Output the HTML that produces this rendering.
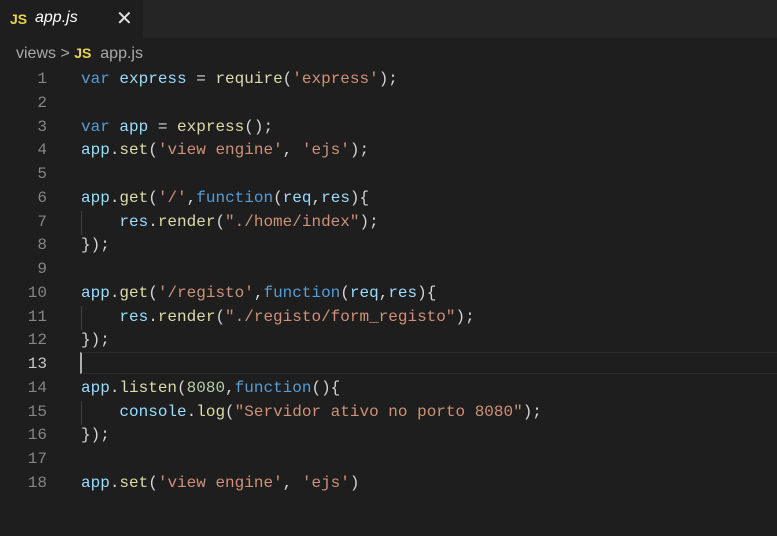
<!DOCTYPE html>
<html><head><style>
body{margin:0;width:777px;height:536px;background:#1e1e1e;overflow:hidden;font-family:"Liberation Sans",sans-serif;}
.tabs{position:absolute;left:0;top:0;width:777px;height:38px;background:#252526;}
.tab{position:absolute;left:0;top:0;width:143px;height:38px;background:#1e1e1e;}
.js{color:#e8d44d;font-weight:bold;font-size:14px;position:absolute;}
.tabname{position:absolute;left:35px;top:9px;color:#fff;font-style:italic;font-size:16px;}
.x{position:absolute;left:116px;top:6px;color:#e0e0e0;font-size:20px;}
.bc{position:absolute;top:45px;left:16px;color:#a9a9a9;font-size:16px;}
.code{position:absolute;left:0;top:68px;font-family:"Liberation Mono",monospace;font-size:16px;}
.l{height:23.75px;line-height:23.75px;position:relative;white-space:pre;color:#d4d4d4;}
.n{position:absolute;left:0;width:47px;text-align:right;color:#858585;}
.c{position:absolute;left:81px;}
.cur{position:absolute;left:80px;top:284px;width:697px;height:20px;border:1px solid #2b2b2b;border-left:2px solid #aeafad;}
.k{color:#569cd6}.v{color:#9cdcfe}.f{color:#dcdcaa}.s{color:#ce9178}.d{color:#b5cea8}
.g{position:absolute;left:81px;width:1px;background:#404040;}
</style></head><body>
<div class="tabs"><div class="tab"><span class="js" style="left:10px;top:11px">JS</span><span class="tabname">app.js</span><span class="x">✕</span></div></div>
<div class="bc">views <span style="color:#a9a9a9">&gt;</span> <span class="js" style="position:static">JS</span>&nbsp; app.js</div>
<div class="code">
<div class="cur"></div>
<div class="g" style="top:143px;height:24px"></div>
<div class="g" style="top:238px;height:24px"></div>
<div class="g" style="top:333px;height:24px"></div>
<div class="l"><span class="n">1</span><span class="c"><span class="k">var</span> <span class="v">express</span> = <span class="f">require</span>(<span class="s">'express'</span>);</span></div>
<div class="l"><span class="n">2</span></div>
<div class="l"><span class="n">3</span><span class="c"><span class="k">var</span> <span class="v">app</span> = <span class="f">express</span>();</span></div>
<div class="l"><span class="n">4</span><span class="c"><span class="v">app</span>.<span class="f">set</span>(<span class="s">'view engine'</span>, <span class="s">'ejs'</span>);</span></div>
<div class="l"><span class="n">5</span></div>
<div class="l"><span class="n">6</span><span class="c"><span class="v">app</span>.<span class="f">get</span>(<span class="s">'/'</span>,<span class="k">function</span>(<span class="v">req</span>,<span class="v">res</span>){</span></div>
<div class="l"><span class="n">7</span><span class="c">    <span class="v">res</span>.<span class="f">render</span>(<span class="s">"./home/index"</span>);</span></div>
<div class="l"><span class="n">8</span><span class="c">});</span></div>
<div class="l"><span class="n">9</span></div>
<div class="l"><span class="n">10</span><span class="c"><span class="v">app</span>.<span class="f">get</span>(<span class="s">'/registo'</span>,<span class="k">function</span>(<span class="v">req</span>,<span class="v">res</span>){</span></div>
<div class="l"><span class="n">11</span><span class="c">    <span class="v">res</span>.<span class="f">render</span>(<span class="s">"./registo/form_registo"</span>);</span></div>
<div class="l"><span class="n">12</span><span class="c">});</span></div>
<div class="l"><span class="n" style="color:#c6c6c6">13</span></div>
<div class="l"><span class="n">14</span><span class="c"><span class="v">app</span>.<span class="f">listen</span>(<span class="d">8080</span>,<span class="k">function</span>(){</span></div>
<div class="l"><span class="n">15</span><span class="c">    <span class="v">console</span>.<span class="f">log</span>(<span class="s">"Servidor ativo no porto 8080"</span>);</span></div>
<div class="l"><span class="n">16</span><span class="c">});</span></div>
<div class="l"><span class="n">17</span></div>
<div class="l"><span class="n">18</span><span class="c"><span class="v">app</span>.<span class="f">set</span>(<span class="s">'view engine'</span>, <span class="s">'ejs'</span>)</span></div>
</div>
</body></html>
